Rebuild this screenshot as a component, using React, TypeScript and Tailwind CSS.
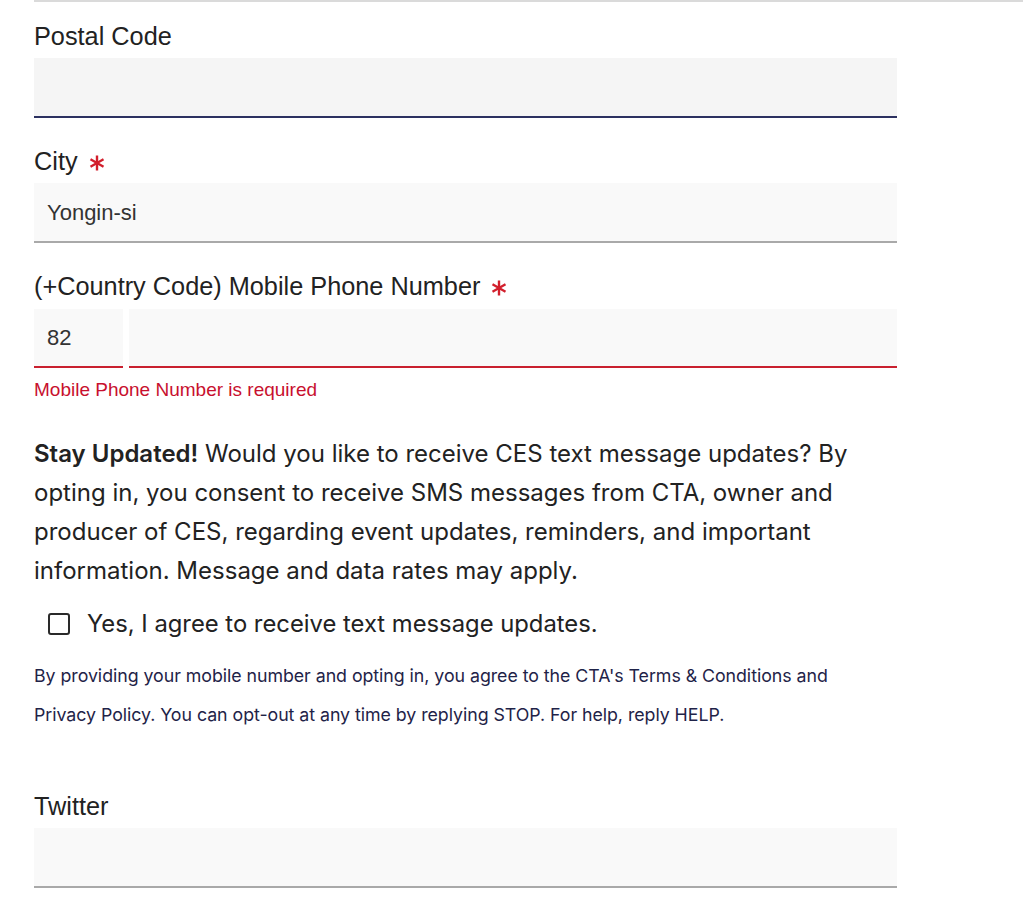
import React from "react"

const LABEL = "font-['Liberation_Sans',Arial,sans-serif]"
const BODY = "font-['Inter','Liberation_Sans',Arial,sans-serif]"

function Required() {
  return (
    <svg viewBox="0 0 16 16" className="ml-[11px] inline-block h-[16px] w-[16px] align-[-1px]" aria-hidden>
      <g stroke="#d21f2c" strokeWidth="2.4" strokeLinecap="butt">
        <line x1="8" y1="0.5" x2="8" y2="15.5" />
        <line x1="1.5" y1="4.25" x2="14.5" y2="11.75" />
        <line x1="1.5" y1="11.75" x2="14.5" y2="4.25" />
      </g>
    </svg>
  )
}

function Field({
  label,
  required,
  value,
  bg = "bg-[#f9f9f9]",
  border = "border-[#a9a9a9]",
  className = "",
}: {
  label: string
  required?: boolean
  value?: string
  bg?: string
  border?: string
  className?: string
}) {
  return (
    <div className={className}>
      <label className={`${LABEL} block text-[25.3px] leading-[30px] text-[#222]`}>
        {label}
        {required && <Required />}
      </label>
      <div className={`mt-[7px] flex h-[60px] items-center border-b-2 px-[13px] ${bg} ${border}`}>
        <span className={`${LABEL} text-[22px] text-[#333]`}>{value}</span>
      </div>
    </div>
  )
}

export default function App() {
  return (
    <div className="min-h-screen bg-white">
      <div className="ml-[34px] h-[2px] bg-[#dadada]" />

      <div className="ml-[34px] w-[863px] pt-[19px]">
        <Field label="Postal Code" bg="bg-[#f5f5f5]" border="border-[#2c3160]" />
        <Field label="City" required value="Yongin-si" className="mt-[28px]" />

        {/* Phone */}
        <div className="mt-[28px]">
          <label className={`${LABEL} block text-[25.3px] leading-[30px] text-[#222]`}>
            (+Country Code) Mobile Phone Number
            <Required />
          </label>
          <div className="mt-[8px] flex gap-[6px]">
            <div className="flex h-[59px] w-[89px] items-center border-b-2 border-[#c9202f] bg-[#f9f9f9] px-[13px]">
              <span className={`${LABEL} text-[22px] text-[#333]`}>82</span>
            </div>
            <div className="h-[59px] flex-1 border-b-2 border-[#c9202f] bg-[#f9f9f9]" />
          </div>
          <p className={`${LABEL} mt-[10px] text-[19px] leading-[24px] text-[#c8102e]`}>
            Mobile Phone Number is required
          </p>
        </div>

        {/* SMS opt-in */}
        <p className={`${BODY} mt-[32px] text-[24px] leading-[39px] text-[#222]`}>
          <strong className="font-semibold">Stay Updated!</strong> Would you like to receive CES text message
          updates? By opting in, you consent to receive SMS messages from CTA, owner and producer of CES,
          regarding event updates, reminders, and important information. Message and data rates may apply.
        </p>

        <label className="mt-[21px] flex items-center gap-[17px] pl-[14px]">
          <span className="h-[22px] w-[22px] rounded-[3px] border-2 border-[#2a2a2a] bg-white" />
          <span className={`${BODY} text-[23.8px] leading-[26px] text-[#222]`}>
            Yes, I agree to receive text message updates.
          </span>
        </label>

        <p className={`${BODY} mt-[19px] max-w-[820px] text-[17.8px] leading-[39px] tracking-[-0.05px] text-[#1f2348]`}>
          By providing your mobile number and opting in, you agree to the CTA's Terms &amp; Conditions and
          Privacy Policy. You can opt-out at any time by replying STOP. For help, reply HELP.
        </p>

        <Field label="Twitter" className="mt-[57px]" />
      </div>
    </div>
  )
}
